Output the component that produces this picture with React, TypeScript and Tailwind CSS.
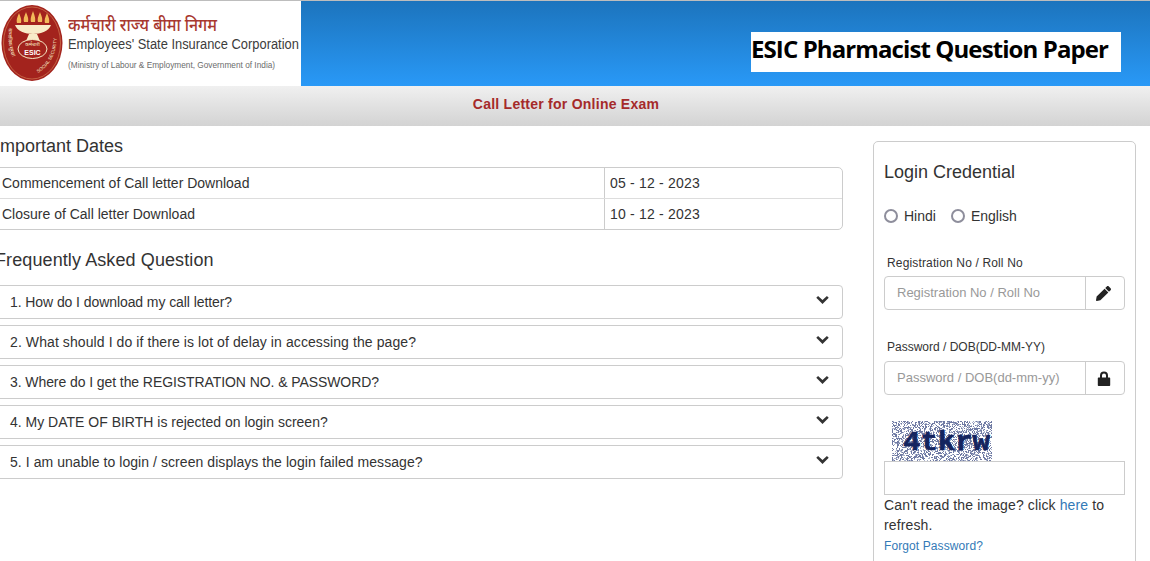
import React from 'react';

const faqs = [
  { q: '1. How do I download my call letter?', fit: 'tracking-[-0.08px]' },
  { q: '2. What should I do if there is lot of delay in accessing the page?', fit: 'tracking-[0.09px]' },
  { q: '3. Where do I get the REGISTRATION NO. & PASSWORD?', fit: 'tracking-[-0.08px]' },
  { q: '4. My DATE OF BIRTH is rejected on login screen?', fit: 'tracking-normal' },
  { q: '5. I am unable to login / screen displays the login failed message?', fit: 'tracking-[0.06px]' },
];

function EsicLogo() {
  return (
    <svg width="62" height="78" viewBox="0 0 62 78" className="shrink-0">
      <ellipse cx="31" cy="39" rx="30.5" ry="38" fill="#a3231d" />
      <ellipse cx="31" cy="39" rx="28.5" ry="36" fill="none" stroke="#d98a5c" strokeWidth="0.6" />
      <path d="M16 19 C15 15 17 12 18 9 C19 12 21 15 20 19Z M23 18 C22 14 24 11 25 8 C26 11 28 14 27 18Z M30 18 C29 14 31 10 32 7 C33 10 35 14 34 18Z M37 18 C36 14 38 11 39 8 C40 11 42 14 41 18Z M44 19 C43 15 45 12 46 9 C47 12 49 15 48 19Z" fill="#f2b95a" />
      <path d="M14 21 H50 C48 27 40 30 32 30 C24 30 16 27 14 21Z" fill="#f8ecc8" />
      <path d="M28 30 H36 L39 37 H25Z" fill="#f8ecc8" />
      <ellipse cx="31.500" cy="45" rx="14.500" ry="9.500" fill="#a3231d" stroke="#f8ecc8" strokeWidth="1" />
      <text x="31.500" y="42" textAnchor="middle" fontSize="5" fill="#f8ecc8" fontFamily="Noto Sans, sans-serif">कर्मचारी</text>
      <text x="31.500" y="51" textAnchor="middle" fontSize="7" fontWeight="700" fill="#ffffff" fontFamily="Liberation Sans, sans-serif">ESIC</text>
      <path id="leftArc" d="M8 24 C5 40 10 58 24 68" fill="none" />
      <path id="rightArc" d="M37 69 C52 60 58 42 55 24" fill="none" />
      <text fontSize="5" fill="#f8ecc8" fontFamily="Noto Sans, sans-serif"><textPath href="#leftArc">सामाजिक सुरक्षा</textPath></text>
      <text fontSize="4.600" fill="#f8ecc8" fontFamily="Liberation Sans, sans-serif"><textPath href="#rightArc">SOCIAL SECURITY</textPath></text>
    </svg>
  );
}

// noisy background of the captcha picture, seeded so it is the same on each render
function Captcha() {
  const dots: React.ReactElement[] = [];
  let seed = 17;
  for (let y = 0; y < 40; y++) {
    for (let x = 0; x < 100; x++) {
      seed = (seed * 16807) % 2147483647;
      if (seed % 100 < 50) {
        dots.push(<rect key={`${x}-${y}`} x={x} y={y} width="1" height="1" fill={seed % 3 === 0 ? '#a9b1cb' : '#6f7aa3'} />);
      }
    }
  }
  return (
    <svg width="100" height="40" viewBox="0 0 100 40" className="ml-2 block">
      {dots}
      <text x="11" y="29" fontSize="28" fontWeight="700" fill="#14245f" stroke="#14245f" strokeWidth="0.7" fontFamily="Liberation Mono, monospace" textLength="87" lengthAdjust="spacingAndGlyphs">4tkrw</text>
    </svg>
  );
}

export default function App() {
  return (
    <div className="h-[561px] w-[1150px] overflow-hidden bg-white font-['Liberation_Sans',Arial,sans-serif] text-sm text-[#333]">
      <header className="flex h-[86px] border-t border-[#bdbdbd] bg-gradient-to-b from-[#1c74bd] to-[#2999f7]">
        <div className="flex h-full w-[301px] shrink-0 items-center gap-[5px] bg-white pb-[1px] pl-[1px]">
          <EsicLogo />
          <div className="-mt-[2px] min-w-0 whitespace-nowrap">
            <div className="origin-left scale-x-[0.88] font-['Noto_Sans','Noto_Sans_Devanagari',sans-serif] text-[18px] leading-[22px] font-medium text-[#a8382f]">कर्मचारी राज्य बीमा निगम</div>
            <div className="origin-left scale-x-[0.92] text-[14px] leading-[19px] text-[#3c3c3c]">Employees' State Insurance Corporation</div>
            <div className="mt-[5px] origin-left scale-x-[0.92] text-[9px] leading-[12px] text-[#6c6c6c]">(Ministry of Labour &amp; Employment, Government of India)</div>
          </div>
        </div>
        <div className="mt-[31px] ml-[450px] h-10 w-[370px] bg-white font-['Open_Sans',sans-serif] text-[24px] leading-[33px] font-bold tracking-[-0.9px] whitespace-nowrap text-black">
          ESIC Pharmacist Question Paper
        </div>
      </header>

      <div className="flex h-10 items-center justify-center bg-gradient-to-b from-[#f0f0f0] to-[#d3d3d3] pr-[18px] pb-[4px] font-bold tracking-[0.25px] text-[#a52a2a]">
        Call Letter for Online Exam
      </div>

      <main className="flex pt-[15px]">
        <section className="-mt-[5px] -ml-[5px] w-[848px] shrink-0">
          <h2 className="text-[18px] leading-[20px] text-[#333]">Important Dates</h2>
          <div className="mt-[11px] ml-[-5px] overflow-hidden rounded-[5px] border border-[#ccc]">
            <div className="flex h-[31px] border-b border-[#ddd]">
              <div className="w-[614px] border-r border-[#ccc] pl-[11px] leading-[31px]">Commencement of Call letter Download</div>
              <div className="pl-[5px] leading-[31px] tracking-[0.2px]">05 - 12 - 2023</div>
            </div>
            <div className="flex h-[30px]">
              <div className="w-[614px] border-r border-[#ccc] pl-[11px] leading-[31px]">Closure of Call letter Download</div>
              <div className="pl-[5px] leading-[31px] tracking-[0.2px]">10 - 12 - 2023</div>
            </div>
          </div>

          <h2 className="mt-[20px] text-[18px] leading-[20px] tracking-[0.1px] text-[#333]">Frequently Asked Question</h2>
          <div className="mt-[15px] ml-[-5px] flex flex-col gap-[6px]">
            {faqs.map((item) => (
              <div key={item.q} className="flex h-[34px] items-center justify-between rounded-[4px] border border-[#ccc] pr-[13px] pl-[19px]">
                <span className={item.fit}>{item.q}</span>
                <svg width="13" height="8" viewBox="0 0 14 9" fill="#333" className="-mt-[4px]">
                  <path d="M2 0 L7 4.500 L12 0 L14 2 L7 9 L0 2 Z" />
                </svg>
              </div>
            ))}
          </div>
        </section>

        <aside className="ml-[30px] h-[440px] w-[263px] shrink-0 rounded-[5px] border border-[#ccc] px-[10px] pt-[20px]">
          <h3 className="text-[18px] leading-[20px] text-[#333]">Login Credential</h3>
          <div className="mt-[24px] flex h-5 items-center">
            <span className="h-[14px] w-[14px] rounded-full border-2 border-[#8e8e9c]" />
            <span className="ml-[6px]">Hindi</span>
            <span className="ml-[15px] h-[14px] w-[14px] rounded-full border-2 border-[#8e8e9c]" />
            <span className="ml-[6px]">English</span>
          </div>

          <label className="mt-[29px] block pl-[3px] text-xs leading-[16px] tracking-[0.15px]">Registration No / Roll No</label>
          <div className="mt-[5px] flex h-[34px] rounded-[4px] border border-[#ccc]">
            <div className="w-[201px] border-r border-[#ccc] pl-[12px] text-[13px] leading-[32px] text-[#999]">Registration No / Roll No</div>
            <div className="flex flex-1 items-center justify-center pr-[3px]">
              <svg width="15" height="15" viewBox="0 0 512 512" fill="#222">
                <path d="M497.9 142.100l-46.100 46.100c-4.700 4.700-12.300 4.700-17 0l-111-111c-4.700-4.700-4.700-12.300 0-17l46.100-46.100c18.700-18.700 49.100-18.700 67.900 0l60.100 60.100c18.800 18.700 18.800 49.100 0 67.900zM284.200 99.800L21.600 362.400.4 483.900c-2.900 16.400 11.400 30.600 27.800 27.800l121.500-21.300 262.600-262.600c4.700-4.700 4.700-12.300 0-17l-111-111c-4.800-4.700-12.400-4.700-17.100 0z" />
              </svg>
            </div>
          </div>

          <label className="mt-[29px] block pl-[3px] text-xs leading-[16px]">Password / DOB(DD-MM-YY)</label>
          <div className="mt-[6px] flex h-[34px] rounded-[4px] border border-[#ccc]">
            <div className="w-[201px] border-r border-[#ccc] pl-[12px] text-[13px] leading-[32px] text-[#999]">Password / DOB(dd-mm-yy)</div>
            <div className="flex flex-1 items-center justify-center pr-[3px]">
              <svg width="14" height="15" viewBox="0 0 14 15" fill="#222">
                <path d="M3 6.500V4.500a4 4 0 0 1 8 0v2h1.200c.6 0 1 .4 1 1V14c0 .6-.4 1-1 1H1.800c-.6 0-1-.4-1-1V7.500c0-.6.4-1 1-1zm2 0h4v-2a2 2 0 0 0-4 0z" />
              </svg>
            </div>
          </div>

          <div className="mt-[26px]">
            <Captcha />
          </div>
          <div className="h-[34px] border border-[#ccc]" />
          <p className="leading-[20px] tracking-[0.12px]">
            Can't read the image? click <span className="text-[#337ab7]">here</span> to refresh.
          </p>
          <p className="mt-[3px] text-xs leading-[17px] tracking-[0.1px] text-[#337ab7]">Forgot Password?</p>
        </aside>
      </main>
    </div>
  );
}
